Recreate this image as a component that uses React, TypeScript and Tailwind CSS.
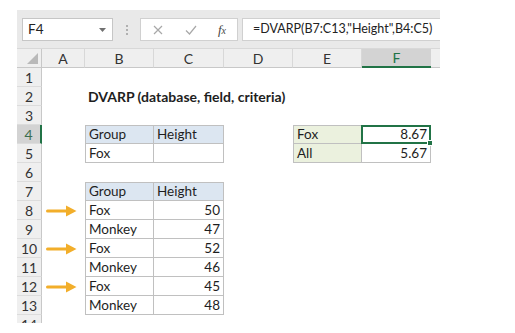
import React from "react";

const FONT = { fontFamily: "Lato, 'Open Sans', sans-serif" };

const colWidths = ["w-[43px]", "w-[69px]", "w-[70px]", "w-[69px]", "w-[69px]", "w-[69px]"];
const colNames = ["A", "B", "C", "D", "E", "F"];

const Arrow: React.FC = () => (
  <svg width="31" height="12" viewBox="0 0 31 12" className="ml-[4px]">
    <rect x="0" y="4.5" width="22" height="3" rx="1.5" fill="#f2ae2a" />
    <path d="M20 0.5 L30.5 6 L20 11.5 Z" fill="#f2ae2a" />
  </svg>
);

interface CellProps {
  col: number;
  className?: string;
  children?: React.ReactNode;
}

const Cell: React.FC<CellProps> = ({ col, className = "", children }) => (
  <div
    className={`${colWidths[col]} h-full shrink-0 flex items-center px-[3px] text-[13.5px] text-[#1e1e1e] ${className}`}
  >
    {children}
  </div>
);

const tb = "border-[#c0c0c0] border-b border-r";

const RowHeader: React.FC<{ n: number; active?: boolean }> = ({ n, active }) => (
  <div
    className={`w-[25px] h-full shrink-0 flex items-center justify-center text-[14px] border-b border-[#dcdcdc] ${
      active
        ? "bg-[#d3d3d3] text-[#3c6e4f] border-r-2 border-r-[#217346]"
        : "bg-[#efefef] text-[#333] border-r border-r-[#c8c8c8]"
    }`}
  >
    {n}
  </div>
);

const Row: React.FC<{ n: number; active?: boolean; children?: React.ReactNode }> = ({
  n,
  active,
  children,
}) => (
  <div className="flex h-[19px] shrink-0">
    <RowHeader n={n} active={active} />
    {children}
  </div>
);

const Empty: React.FC<{ from: number }> = ({ from }) => (
  <>
    {colNames.slice(from).map((c, i) => (
      <Cell key={c} col={from + i} />
    ))}
  </>
);

const dataRows = [
  { n: 8, group: "Fox", h: 50, arrow: true },
  { n: 9, group: "Monkey", h: 47 },
  { n: 10, group: "Fox", h: 52, arrow: true },
  { n: 11, group: "Monkey", h: 46 },
  { n: 12, group: "Fox", h: 45, arrow: true },
  { n: 13, group: "Monkey", h: 48 },
];

export default function App() {
  return (
    <div className="w-[515px] h-[333px] bg-white overflow-hidden" style={FONT}>
      <div className="ml-[17px] mt-[10px] w-[423px] h-[313px] bg-[#e9e9e9] flex flex-col overflow-hidden">
        {/* formula bar */}
        <div className="h-[38px] shrink-0 flex items-start pt-[8px] pl-[5px]">
          <div className="w-[91px] h-[23px] shrink-0 bg-white border border-[#c6c6c6] flex items-center justify-between pl-[5px] pr-[6px]">
            <span className="text-[13.5px] text-[#222]">F4</span>
            <svg width="7" height="4" viewBox="0 0 7 4">
              <path d="M0 0 L7 0 L3.5 4 Z" fill="#707070" />
            </svg>
          </div>
          <div className="w-[27px] h-[23px] shrink-0 flex flex-col items-center justify-center gap-[2px]">
            <span className="w-[2px] h-[2px] bg-[#b0b0b0]" />
            <span className="w-[2px] h-[2px] bg-[#b0b0b0]" />
            <span className="w-[2px] h-[2px] bg-[#b0b0b0]" />
          </div>
          <div className="w-[98px] h-[23px] shrink-0 bg-white border border-[#d0d0d0] flex items-center">
            <div className="w-[34px] flex justify-center">
              <svg width="10" height="10" viewBox="0 0 10 10">
                <path d="M1 1 L9 9 M9 1 L1 9" stroke="#a8a8a8" strokeWidth="1.2" />
              </svg>
            </div>
            <div className="w-[32px] flex justify-center">
              <svg width="12" height="10" viewBox="0 0 12 10">
                <path d="M1 5.5 L4.5 9 L11 1" stroke="#a8a8a8" strokeWidth="1.2" fill="none" />
              </svg>
            </div>
            <div className="w-[30px] flex justify-center">
              <span
                className="italic text-[13px] text-[#444]"
                style={{ fontFamily: "'Liberation Serif', serif" }}
              >
                f<span className="text-[10px]">x</span>
              </span>
            </div>
          </div>
          <div className="ml-[4px] flex-1 min-w-0 h-[23px] bg-white border-y border-l border-[#d0d0d0] flex items-center pl-[10px] overflow-hidden">
            <span className="text-[12.5px] text-[#222] whitespace-nowrap">
              =DVARP(B7:C13,"Height",B4:C5)
            </span>
          </div>
        </div>

        {/* column headers */}
        <div className="flex h-[20px] shrink-0 bg-[#efefef] border-t border-[#d8d8d8]">
          <div className="w-[25px] shrink-0 flex items-end justify-end pr-[3px] pb-[3px] border-r border-[#c8c8c8] border-b border-b-[#c8c8c8]">
            <svg width="11" height="11" viewBox="0 0 11 11">
              <path d="M11 0 L11 11 L0 11 Z" fill="#b9b9b9" />
            </svg>
          </div>
          {colNames.map((c, i) => (
            <div
              key={c}
              className={`${colWidths[i]} shrink-0 flex items-center justify-center text-[14px] ${
                c === "F"
                  ? "bg-[#d3d3d3] text-[#217346] border-b-2 border-[#217346]"
                  : "text-[#333] border-r border-[#d8d8d8] border-b border-b-[#c8c8c8]"
              }`}
            >
              {c}
            </div>
          ))}
          <div className="flex-1 border-b border-[#c8c8c8]" />
        </div>

        {/* sheet */}
        <div className="flex-1 bg-white flex flex-col">
          <Row n={1}>
            <Empty from={0} />
          </Row>
          <Row n={2}>
            <Cell col={0} />
            <Cell col={1} className="font-bold whitespace-nowrap overflow-visible !text-[14px]">
              DVARP (database, field, criteria)
            </Cell>
          </Row>
          <Row n={3}>
            <Empty from={0} />
          </Row>
          <Row n={4} active>
            <Cell col={0} />
            <Cell col={1} className={`${tb} border-l border-t bg-[#dce6f1]`}>
              Group
            </Cell>
            <Cell col={2} className={`${tb} border-t bg-[#dce6f1]`}>
              Height
            </Cell>
            <Cell col={3} />
            <Cell col={4} className={`${tb} border-l border-t bg-[#ebf1de]`}>
              Fox
            </Cell>
            <Cell col={5} className={`${tb} border-t justify-end relative`}>
              8.67
              <div className="absolute -left-[1px] -top-[1px] -right-[1px] -bottom-[1px] border-2 border-[#217346]" />
              <div className="absolute -right-[3px] -bottom-[3px] w-[6px] h-[6px] bg-[#217346] border border-white" />
            </Cell>
          </Row>
          <Row n={5}>
            <Cell col={0} />
            <Cell col={1} className={`${tb} border-l`}>
              Fox
            </Cell>
            <Cell col={2} className={tb} />
            <Cell col={3} />
            <Cell col={4} className={`${tb} border-l bg-[#ebf1de]`}>
              All
            </Cell>
            <Cell col={5} className={`${tb} justify-end`}>
              5.67
            </Cell>
          </Row>
          <Row n={6}>
            <Empty from={0} />
          </Row>
          <Row n={7}>
            <Cell col={0} />
            <Cell col={1} className={`${tb} border-l border-t bg-[#dce6f1]`}>
              Group
            </Cell>
            <Cell col={2} className={`${tb} border-t bg-[#dce6f1]`}>
              Height
            </Cell>
          </Row>
          {dataRows.map((r) => (
            <Row key={r.n} n={r.n}>
              <Cell col={0} className="!px-0">{r.arrow && <Arrow />}</Cell>
              <Cell col={1} className={`${tb} border-l`}>
                {r.group}
              </Cell>
              <Cell col={2} className={`${tb} justify-end`}>
                {r.h}
              </Cell>
            </Row>
          ))}
          <Row n={14} />
        </div>
      </div>
    </div>
  );
}
